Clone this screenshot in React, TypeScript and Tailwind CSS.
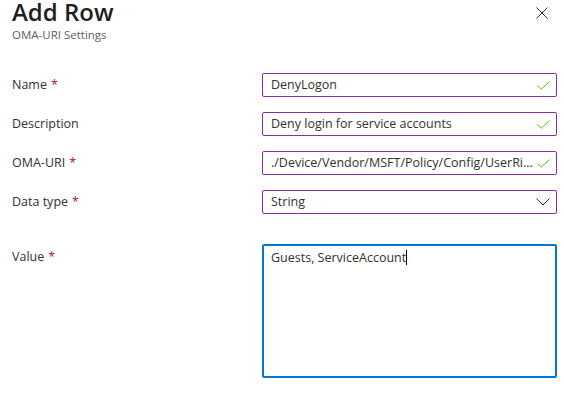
import type { ReactNode } from 'react';

const font = { fontFamily: '"Segoe UI", "Open Sans", "Noto Sans", sans-serif' };

function Check() {
  return (
    <svg width="13" height="9" viewBox="0 0 13 9" fill="none" className="shrink-0">
      <path d="M0.5 4.5 L4.3 8.2 L12.5 0.5" stroke="#6bb700" strokeWidth="1" />
    </svg>
  );
}

function Chevron() {
  return (
    <svg width="14" height="8" viewBox="0 0 14 8" fill="none" className="shrink-0">
      <path d="M0.5 0.5 L7 7 L13.5 0.5" stroke="#323130" strokeWidth="1" />
    </svg>
  );
}

function Label({ text, required }: { text: string; required?: boolean }) {
  return (
    <div className="text-[12.5px] text-[#323130]">
      {text}
      {required && <span className="text-[#a4262c] ml-1">*</span>}
    </div>
  );
}

function Field({ children, icon }: { children: ReactNode; icon: ReactNode }) {
  return (
    <div className="h-6 border border-[#8a2ca8] rounded-[2px] flex items-center pl-2 pr-[6px] gap-1 min-w-0">
      <div className="flex-1 min-w-0 truncate text-[12.5px] text-[#323130]">{children}</div>
      {icon}
    </div>
  );
}

export default function App() {
  const rows = [
    { label: 'Name', required: true, value: 'DenyLogon', icon: <Check /> },
    { label: 'Description', required: false, value: 'Deny login for service accounts', icon: <Check /> },
    { label: 'OMA-URI', required: true, value: './Device/Vendor/MSFT/Policy/Config/UserRights/DenyLocalLogOn', icon: <Check /> },
    { label: 'Data type', required: true, value: 'String', icon: <Chevron /> },
  ];

  return (
    <div className="w-[564px] h-[397px] bg-white overflow-hidden pl-3 pr-[7px]" style={font}>
      <div className="flex justify-between">
        <div>
          <h1 className="text-[24px] leading-[24px] font-semibold text-[#201f1e]">Add Row</h1>
          <p className="mt-[3px] text-[11.5px] leading-4 text-[#605e5c]">OMA-URI Settings</p>
        </div>
        <svg width="12" height="12" viewBox="0 0 12 12" className="mt-[7px] mr-[9px]">
          <path d="M0.5 0.5 L11.5 11.5 M11.5 0.5 L0.5 11.5" stroke="#323130" strokeWidth="1" />
        </svg>
      </div>

      <div className="mt-[30px] flex flex-col gap-[15px]">
        {rows.map(r => (
          <div key={r.label} className="grid grid-cols-[250px_minmax(0,1fr)] items-center">
            <Label text={r.label} required={r.required} />
            <Field icon={r.icon}>{r.value}</Field>
          </div>
        ))}
      </div>

      <div className="mt-[30px] grid grid-cols-[250px_minmax(0,1fr)]">
        <div className="pt-[4px]">
          <Label text="Value" required />
        </div>
        <div className="h-[134px] border-2 border-[#0078d4] rounded-[2px] px-[7px] pt-[3px] text-[12.5px] text-[#323130]">
          Guests, ServiceAccount
          <span className="inline-block w-px h-[15px] bg-black align-middle -mt-[2px]" />
        </div>
      </div>
    </div>
  );
}
